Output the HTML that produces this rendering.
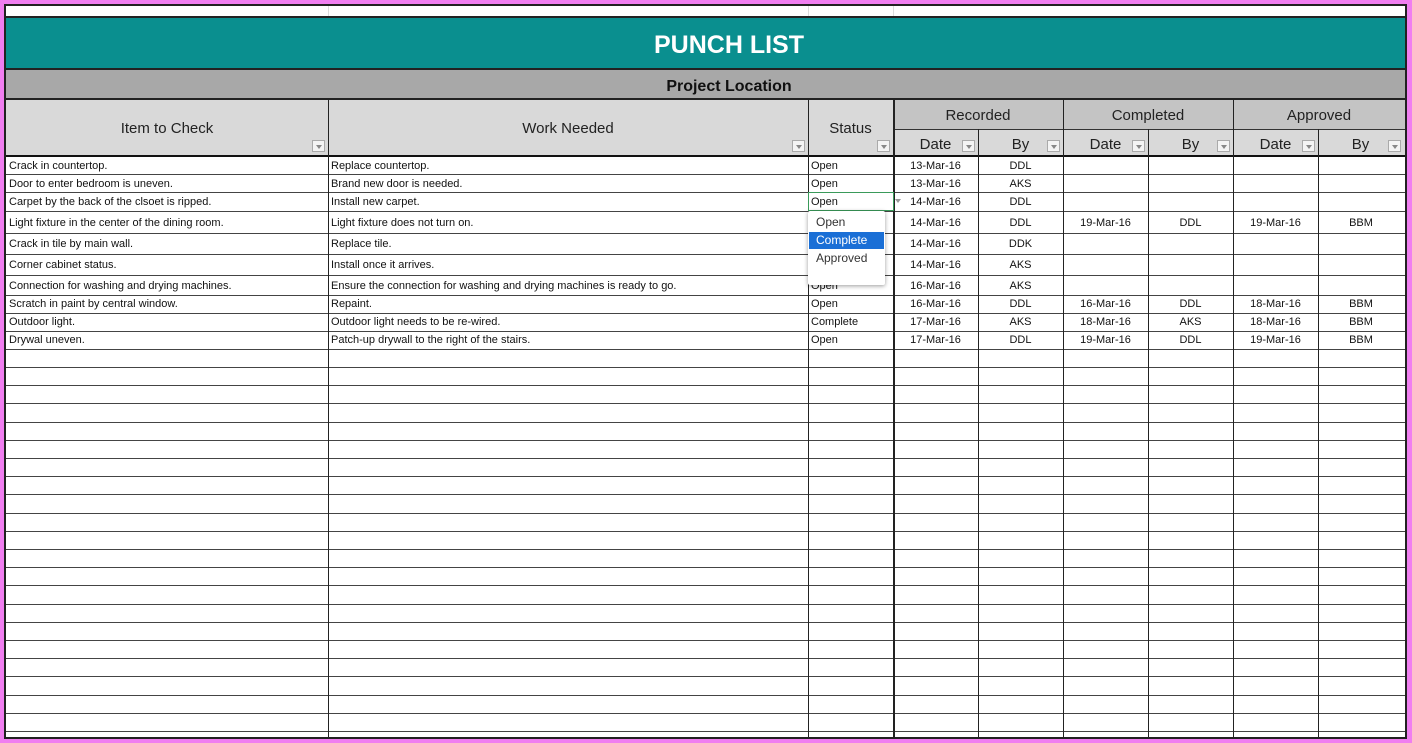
<!DOCTYPE html>
<html><head><meta charset="utf-8"><style>
*{margin:0;padding:0;box-sizing:border-box}
body{width:1412px;height:743px;background:#f07ef0;position:relative;overflow:hidden;font-family:"Liberation Sans",sans-serif}
#s{position:absolute;left:4px;top:4px;width:1403px;height:735px;background:#fff;border:2px solid #222}
.a{position:absolute}
.h{position:absolute;height:1px;background:#333}
.v{position:absolute;width:1px;background:#222}
.t{position:absolute;font-size:11px;color:#111;white-space:nowrap;line-height:14px}
.c{text-align:center}
.hd{position:absolute;font-size:15px;color:#222;text-align:center}
.dd{position:absolute;width:13px;height:12px;border:1px solid #aaa;background:#f4f4f4}
.dd:after{content:"";position:absolute;left:3px;top:4px;border-left:3px solid transparent;border-right:3px solid transparent;border-top:4px solid #888}
</style></head><body>
<div id="s"></div>
<div class="v" style="left:328px;top:6px;height:10px;background:#ddd"></div>
<div class="v" style="left:808px;top:6px;height:10px;background:#ddd"></div>
<div class="v" style="left:893px;top:6px;height:10px;background:#ddd"></div>
<div class="a" style="left:6px;top:16px;width:1399px;height:54px;background:#0a8f8f;border-top:2px solid #222;border-bottom:2px solid #222"></div>
<div class="a" style="left:328px;top:31px;width:802px;text-align:center;font-size:25px;font-weight:bold;color:#fff">PUNCH LIST</div>
<div class="a" style="left:6px;top:70px;width:1399px;height:30px;background:#a8a8a8;border-bottom:2px solid #222"></div>
<div class="a" style="left:328px;top:78px;width:802px;text-align:center;font-size:16px;font-weight:bold;color:#111">Project Location</div>
<div class="a" style="left:6px;top:100px;width:887px;height:55px;background:#d9d9d9"></div>
<div class="a" style="left:893px;top:100px;width:512px;height:29px;background:#c4c4c4"></div>
<div class="a" style="left:893px;top:129px;width:512px;height:26px;background:#d9d9d9"></div>
<div class="h" style="left:893px;top:129px;width:512px"></div>
<div class="h" style="left:6px;top:155px;width:1399px;height:2px;background:#111"></div>
<div class="hd" style="left:6px;top:120px;width:322px">Item to Check</div>
<div class="hd" style="left:328px;top:120px;width:480px">Work Needed</div>
<div class="hd" style="left:808px;top:120px;width:85px">Status</div>
<div class="hd" style="left:893px;top:107px;width:170px">Recorded</div>
<div class="hd" style="left:1063px;top:107px;width:170px">Completed</div>
<div class="hd" style="left:1233px;top:107px;width:172px">Approved</div>
<div class="hd" style="left:893px;top:136px;width:85px">Date</div>
<div class="hd" style="left:978px;top:136px;width:85px">By</div>
<div class="hd" style="left:1063px;top:136px;width:85px">Date</div>
<div class="hd" style="left:1148px;top:136px;width:85px">By</div>
<div class="hd" style="left:1233px;top:136px;width:85px">Date</div>
<div class="hd" style="left:1318px;top:136px;width:85px">By</div>
<div class="dd" style="left:312px;top:140px"></div>
<div class="dd" style="left:792px;top:140px"></div>
<div class="dd" style="left:877px;top:140px"></div>
<div class="dd" style="left:962px;top:140px"></div>
<div class="dd" style="left:1047px;top:140px"></div>
<div class="dd" style="left:1132px;top:140px"></div>
<div class="dd" style="left:1217px;top:140px"></div>
<div class="dd" style="left:1302px;top:140px"></div>
<div class="dd" style="left:1388px;top:140px"></div>
<div id="g"></div>
<script>
var g=document.getElementById('g'),h='';
var rows=[157,174,192,211,233,254,275,295,313,331,349];
for(var y=367;y<735;y+=18.2)rows.push(Math.round(y));
rows.forEach(function(y,i){if(i>0)h+='<div class="h" style="left:6px;top:'+y+'px;width:1399px;background:#444"></div>';});
[328,808].forEach(function(x){h+='<div class="v" style="left:'+x+'px;top:100px;height:637px"></div>';});
h+='<div class="v" style="left:893px;top:100px;height:637px;width:2px"></div>';
[978,1148,1318].forEach(function(x){h+='<div class="v" style="left:'+x+'px;top:129px;height:608px"></div>';});
[1063,1233].forEach(function(x){h+='<div class="v" style="left:'+x+'px;top:100px;height:637px"></div>';});
g.innerHTML=h;
</script>
<div class="t" style="left:9px;top:159px">Crack in countertop.</div>
<div class="t" style="left:9px;top:177px">Door to enter bedroom is uneven.</div>
<div class="t" style="left:9px;top:195px">Carpet by the back of the clsoet is ripped.</div>
<div class="t" style="left:9px;top:216px">Light fixture in the center of the dining room.</div>
<div class="t" style="left:9px;top:237px">Crack in tile by main wall.</div>
<div class="t" style="left:9px;top:258px">Corner cabinet status.</div>
<div class="t" style="left:9px;top:279px">Connection for washing and drying machines.</div>
<div class="t" style="left:9px;top:297px">Scratch in paint by central window.</div>
<div class="t" style="left:9px;top:315px">Outdoor light.</div>
<div class="t" style="left:9px;top:333px">Drywal uneven.</div>
<div class="t" style="left:331px;top:159px">Replace countertop.</div>
<div class="t" style="left:331px;top:177px">Brand new door is needed.</div>
<div class="t" style="left:331px;top:195px">Install new carpet.</div>
<div class="t" style="left:331px;top:216px">Light fixture does not turn on.</div>
<div class="t" style="left:331px;top:237px">Replace tile.</div>
<div class="t" style="left:331px;top:258px">Install once it arrives.</div>
<div class="t" style="left:331px;top:279px">Ensure the connection for washing and drying machines is ready to go.</div>
<div class="t" style="left:331px;top:297px">Repaint.</div>
<div class="t" style="left:331px;top:315px">Outdoor light needs to be re-wired.</div>
<div class="t" style="left:331px;top:333px">Patch-up drywall to the right of the stairs.</div>
<div class="t" style="left:811px;top:159px">Open</div>
<div class="t" style="left:811px;top:177px">Open</div>
<div class="t" style="left:811px;top:195px">Open</div>
<div class="t" style="left:811px;top:279px">Open</div>
<div class="t" style="left:811px;top:297px">Open</div>
<div class="t" style="left:811px;top:315px">Complete</div>
<div class="t" style="left:811px;top:333px">Open</div>
<div class="a" style="left:808px;top:192px;width:86px;height:19px;border:1px solid #3a9a5a"></div>
<div class="a" style="left:895px;top:199px;border-left:3px solid transparent;border-right:3px solid transparent;border-top:4px solid #999"></div>
<div class="t c" style="left:893px;top:159px;width:85px">13-Mar-16</div>
<div class="t c" style="left:893px;top:177px;width:85px">13-Mar-16</div>
<div class="t c" style="left:893px;top:195px;width:85px">14-Mar-16</div>
<div class="t c" style="left:893px;top:216px;width:85px">14-Mar-16</div>
<div class="t c" style="left:893px;top:237px;width:85px">14-Mar-16</div>
<div class="t c" style="left:893px;top:258px;width:85px">14-Mar-16</div>
<div class="t c" style="left:893px;top:279px;width:85px">16-Mar-16</div>
<div class="t c" style="left:893px;top:297px;width:85px">16-Mar-16</div>
<div class="t c" style="left:893px;top:315px;width:85px">17-Mar-16</div>
<div class="t c" style="left:893px;top:333px;width:85px">17-Mar-16</div>
<div class="t c" style="left:978px;top:159px;width:85px">DDL</div>
<div class="t c" style="left:978px;top:177px;width:85px">AKS</div>
<div class="t c" style="left:978px;top:195px;width:85px">DDL</div>
<div class="t c" style="left:978px;top:216px;width:85px">DDL</div>
<div class="t c" style="left:978px;top:237px;width:85px">DDK</div>
<div class="t c" style="left:978px;top:258px;width:85px">AKS</div>
<div class="t c" style="left:978px;top:279px;width:85px">AKS</div>
<div class="t c" style="left:978px;top:297px;width:85px">DDL</div>
<div class="t c" style="left:978px;top:315px;width:85px">AKS</div>
<div class="t c" style="left:978px;top:333px;width:85px">DDL</div>
<div class="t c" style="left:1063px;top:216px;width:85px">19-Mar-16</div>
<div class="t c" style="left:1063px;top:297px;width:85px">16-Mar-16</div>
<div class="t c" style="left:1063px;top:315px;width:85px">18-Mar-16</div>
<div class="t c" style="left:1063px;top:333px;width:85px">19-Mar-16</div>
<div class="t c" style="left:1148px;top:216px;width:85px">DDL</div>
<div class="t c" style="left:1148px;top:297px;width:85px">DDL</div>
<div class="t c" style="left:1148px;top:315px;width:85px">AKS</div>
<div class="t c" style="left:1148px;top:333px;width:85px">DDL</div>
<div class="t c" style="left:1233px;top:216px;width:85px">19-Mar-16</div>
<div class="t c" style="left:1233px;top:297px;width:85px">18-Mar-16</div>
<div class="t c" style="left:1233px;top:315px;width:85px">18-Mar-16</div>
<div class="t c" style="left:1233px;top:333px;width:85px">19-Mar-16</div>
<div class="t c" style="left:1318px;top:216px;width:86px">BBM</div>
<div class="t c" style="left:1318px;top:297px;width:86px">BBM</div>
<div class="t c" style="left:1318px;top:315px;width:86px">BBM</div>
<div class="t c" style="left:1318px;top:333px;width:86px">BBM</div>
<div class="a" style="left:808px;top:211px;width:77px;height:74px;background:#fff;box-shadow:0 1px 4px rgba(0,0,0,.4);border-radius:2px"></div>
<div class="t" style="left:816px;top:215px;font-size:12px;color:#333">Open</div>
<div class="a" style="left:809px;top:232px;width:75px;height:17px;background:#1a6fd6"></div>
<div class="t" style="left:816px;top:233px;font-size:12px;color:#fff">Complete</div>
<div class="t" style="left:816px;top:251px;font-size:12px;color:#333">Approved</div>
</body></html>
